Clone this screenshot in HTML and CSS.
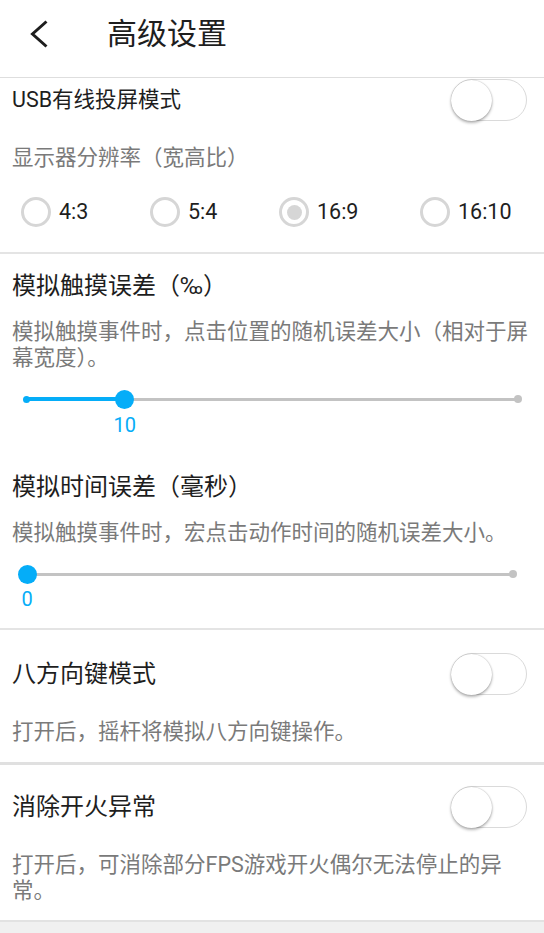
FILE: index.html
```html
<!DOCTYPE html>
<html lang="zh-CN">
<head>
<meta charset="utf-8">
<title>高级设置</title>
<link rel="stylesheet" href="styles.css">
</head>
<body>
<div class="page">
  <header class="header">
    <svg class="back" width="24" height="32" viewBox="0 0 24 32" aria-hidden="true">
      <polyline points="19.5,3.5 5.5,16 19.5,28.5" fill="none" stroke="#1e1e1e" stroke-width="3"/>
    </svg>
    <h1 class="title">高级设置</h1>
  </header>

  <section class="sec sec-usb">
    <div class="row row-usb">
      <span class="usb-label">USB有线投屏模式</span>
      <span class="switch"><span class="knob"></span></span>
    </div>
    <div class="sub">显示器分辨率（宽高比）</div>
    <div class="radios">
      <div class="radio"><span class="ring"></span><span class="rlabel">4:3</span></div>
      <div class="radio"><span class="ring"></span><span class="rlabel">5:4</span></div>
      <div class="radio"><span class="ring checked"></span><span class="rlabel">16:9</span></div>
      <div class="radio"><span class="ring"></span><span class="rlabel">16:10</span></div>
    </div>
  </section>

  <section class="sec sec-sliders">
    <div class="stitle">模拟触摸误差（‰）</div>
    <div class="desc">模拟触摸事件时，点击位置的随机误差大小（相对于屏幕宽度）。</div>
    <div class="slider slider-a">
      <span class="dot dot-on"></span>
      <span class="bar-on bar-a"></span>
      <span class="thumb"></span>
      <span class="bar-off"></span>
      <span class="dot dot-off"></span>
    </div>
    <div class="value value-a">10</div>

    <div class="stitle stitle-2">模拟时间误差（毫秒）</div>
    <div class="desc">模拟触摸事件时，宏点击动作时间的随机误差大小。</div>
    <div class="slider slider-b">
      <span class="thumb"></span>
      <span class="bar-off"></span>
      <span class="dot dot-off"></span>
    </div>
    <div class="value value-b">0</div>
  </section>

  <section class="sec sec-toggle sec-eight">
    <div class="row">
      <span class="stitle">八方向键模式</span>
      <span class="switch"><span class="knob"></span></span>
    </div>
    <div class="desc desc-toggle">打开后，摇杆将模拟八方向键操作。</div>
  </section>

  <section class="sec sec-toggle sec-fire">
    <div class="row">
      <span class="stitle">消除开火异常</span>
      <span class="switch"><span class="knob"></span></span>
    </div>
    <div class="desc desc-toggle">打开后，可消除部分FPS游戏开火偶尔无法停止的异常。</div>
  </section>

  <div class="footer-fill"></div>
</div>
</body>
</html>
```

FILE: styles.css
```css
* { box-sizing: border-box; }

html, body {
  margin: 0;
  padding: 0;
  background: #ffffff;
}

body {
  font-family: Roboto, "Noto Sans CJK SC", "Noto Sans", sans-serif;
  color: #1e1e1e;
}

.page {
  width: 544px;
  min-height: 933px;
  display: flex;
  flex-direction: column;
  background: #ffffff;
}

/* header */
.header {
  height: 78px;
  padding-bottom: 10px;
  border-bottom: 1px solid #dedede;
  display: flex;
  align-items: center;
}

.back {
  margin-left: 27px;
  flex: none;
}

.title {
  margin: 0 0 0 56px;
  font-size: 30px;
  line-height: 36px;
  font-weight: 400;
  color: #1e1e1e;
}

/* generic */
.sec {
  padding: 0 17px 0 12px;
}

.row {
  height: 44px;
  display: flex;
  align-items: center;
  justify-content: space-between;
}

.usb-label {
  font-size: 21.5px;
  line-height: 26px;
  color: #1e1e1e;
}

.stitle {
  font-size: 24px;
  line-height: 30px;
  color: #1e1e1e;
}

.desc {
  font-size: 21.5px;
  line-height: 26px;
  color: #7a7a7a;
}

.sub {
  margin-top: 23px;
  font-size: 21.5px;
  line-height: 26px;
  color: #7a7a7a;
}

/* switch */
.switch {
  flex: none;
  width: 76px;
  height: 42px;
  border-radius: 21px;
  border: 1.5px solid #dadada;
  background: #ffffff;
  display: flex;
  align-items: center;
}

.knob {
  width: 41px;
  height: 41px;
  margin-left: -1.5px;
  border-radius: 50%;
  background: #ffffff;
  box-shadow: 0 2px 3px rgba(0, 0, 0, 0.28), 0 0 1.5px rgba(0, 0, 0, 0.3);
}

/* usb section */
.sec-usb {
  padding-bottom: 25px;
  border-bottom: 2px solid #e4e4e4;
}

.radios {
  margin-top: 26px;
  margin-left: 9px;
  display: grid;
  grid-template-columns: 129px 129px 141px 1fr;
  height: 30px;
}

.radio {
  display: flex;
  align-items: center;
  gap: 8px;
}

.ring {
  width: 30px;
  height: 30px;
  border-radius: 50%;
  border: 3px solid #d6d6d6;
  display: flex;
  align-items: center;
  justify-content: center;
}

.ring.checked::after {
  content: "";
  width: 15px;
  height: 15px;
  border-radius: 50%;
  background: #d6d6d6;
}

.rlabel {
  font-size: 21.5px;
  line-height: 26px;
  color: #1e1e1e;
}

/* sliders section */
.sec-sliders {
  padding: 17px 0 17px 0;
  border-bottom: 2px solid #e4e4e4;
}

.sec-sliders .stitle {
  padding: 0 17px 0 12px;
}

.sec-sliders .desc {
  margin-top: 18px;
  padding: 0 4px 0 12px;
}

.stitle-2 {
  margin-top: 35px;
}

.slider {
  margin-top: 16px;
  height: 24px;
  display: flex;
  align-items: center;
}

.slider-a {
  padding: 0 22px 0 22.5px;
}

.slider-b {
  padding: 0 27px 0 17.5px;
}

.dot {
  flex: none;
  border-radius: 50%;
}

.dot-on {
  width: 7px;
  height: 7px;
  background: #05adf8;
}

.dot-off {
  width: 8px;
  height: 8px;
  background: #c3c3c3;
  margin-left: -4px;
}

.bar-on {
  flex: none;
  height: 4px;
  background: #05adf8;
  margin-left: -3px;
}

.bar-a {
  width: 89px;
}

.thumb {
  flex: none;
  width: 19px;
  height: 19px;
  border-radius: 50%;
  background: #05adf8;
  position: relative;
  z-index: 1;
}

.bar-a + .thumb {
  margin-left: -0.5px;
}

.bar-off {
  flex: 1;
  height: 3px;
  background: #c3c3c3;
  margin-left: -2px;
}

.value {
  font-size: 20px;
  line-height: 24px;
  color: #05adf8;
}

.value-a {
  margin-top: 2px;
  padding-left: 113.5px;
}

.value-b {
  margin-top: 1px;
  padding-left: 21.5px;
}

/* toggle sections */
.sec-eight {
  padding-top: 22px;
  padding-bottom: 17px;
  border-bottom: 3px solid #e0e0e0;
}

.sec-fire {
  padding-top: 20px;
  padding-bottom: 16px;
  border-bottom: 2px solid #e2e2e2;
}

.desc-toggle {
  margin-top: 23px;
}

.footer-fill {
  flex: 1;
  background: #f0f0f0;
}
```
